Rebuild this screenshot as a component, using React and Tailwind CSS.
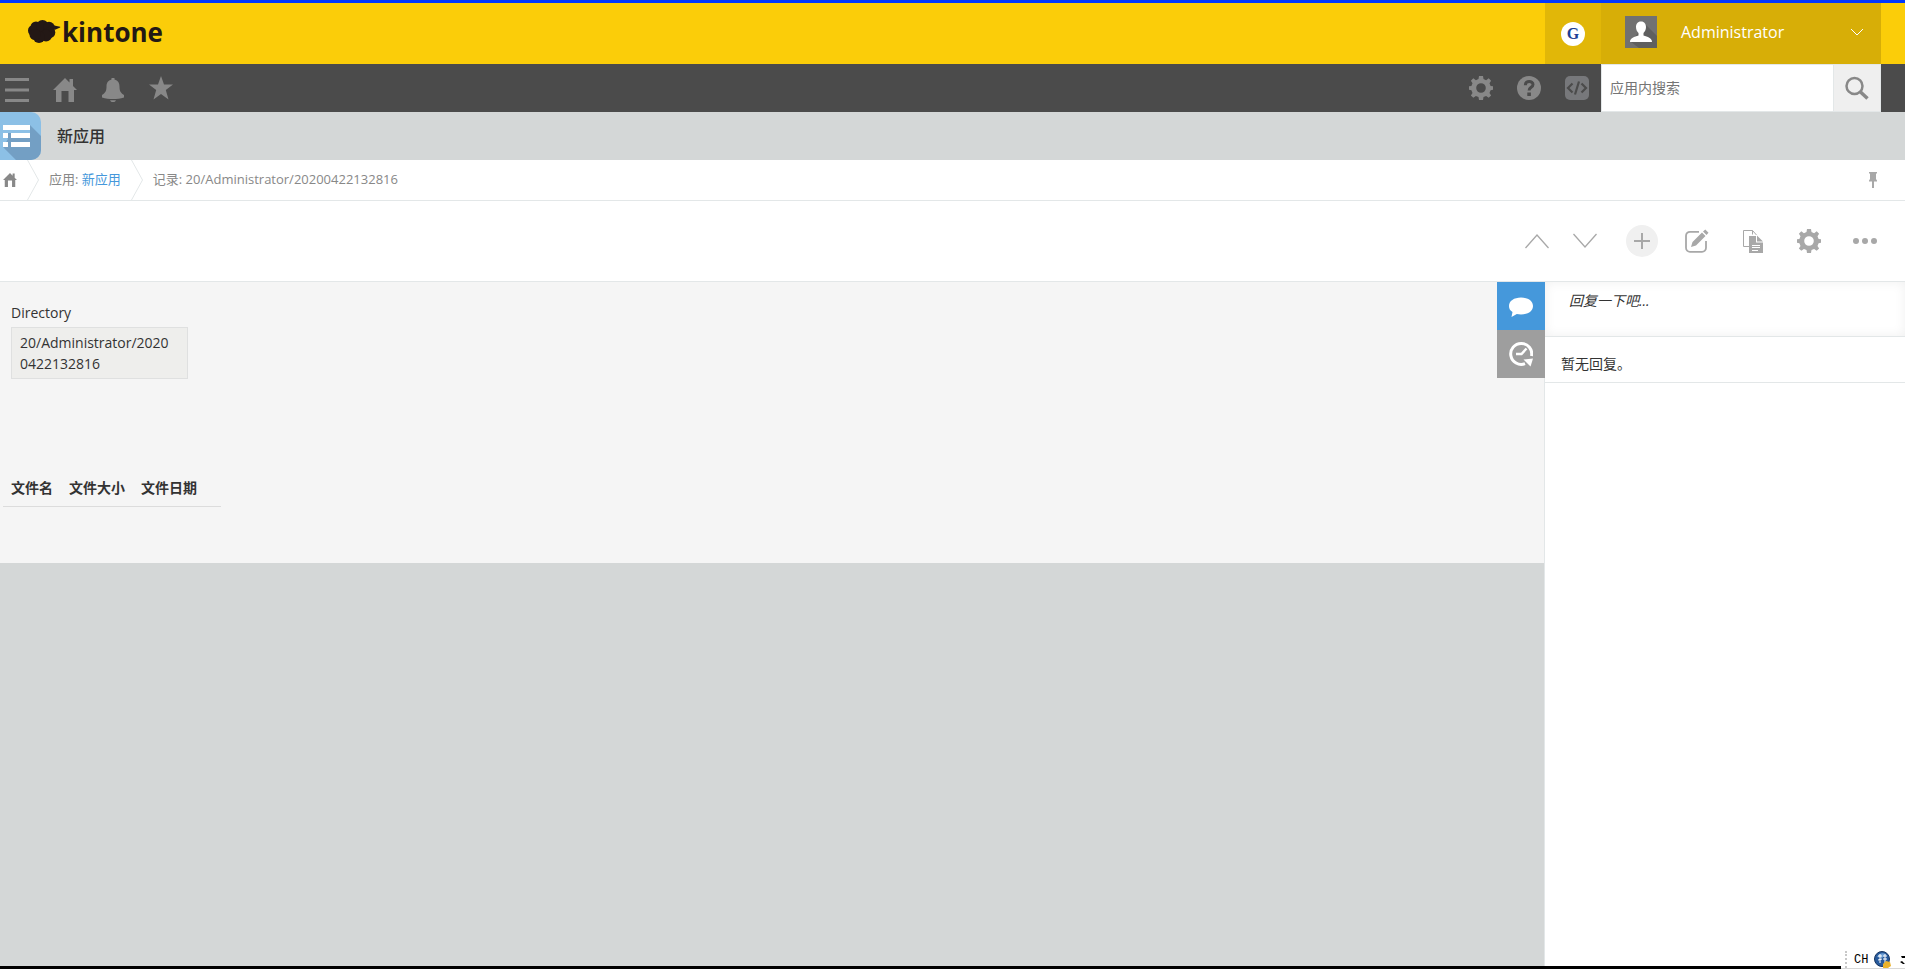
import React, { useState } from 'react';

const gearPath =
  'M10 0h4l.5 3.1 2.6 1.1L19.7 2.3l2.4 2.4-1.6 2.5 1.1 2.7L24 10.300v3.400l-2.400.500-1.100 2.700 1.600 2.500-2.400 2.400-2.600-1.800-2.600 1.100L14 24h-4l-.5-2.900-2.600-1.100-2.600 1.800-2.400-2.400 1.600-2.500-1.100-2.700L0 13.700v-3.400l2.400-.4 1.100-2.700L1.900 4.700l2.400-2.400 2.600 1.900 2.600-1.100zM12 7.200a4.800 4.800 0 1 0 0 9.600 4.800 4.800 0 0 0 0-9.600z';

const GearIcon = () => (
  <svg width="24" height="24" viewBox="0 0 24 24" fill="currentColor" fillRule="evenodd">
    <path d={gearPath} />
  </svg>
);

const HomeIcon = ({ size = 24 }) => (
  <svg width={size} height={size} viewBox="0 0 24 24" fill="currentColor">
    <path d="M12 0l4.500 4.500V1H20v7l4 4h-3v12h-5.500V13h-7v11H3V12H0z" />
  </svg>
);

const Logo = () => (
  <span className="flex items-center text-[#231815]">
    <svg width="33" height="24" viewBox="0 0 33 24" fill="currentColor">
      <circle cx="5.500" cy="10.500" r="5.500" />
      <circle cx="8" cy="7" r="5.500" />
      <circle cx="14.500" cy="6.500" r="6.500" />
      <circle cx="21" cy="7.500" r="5.800" />
      <circle cx="21.500" cy="12.500" r="5.800" />
      <circle cx="18" cy="15.500" r="6" />
      <circle cx="11" cy="17" r="6" />
      <circle cx="7" cy="14.500" r="5.500" />
      <path d="M25 5.200l7.200 1.500v.800L26.500 10z" />
    </svg>
    <span className="ml-px text-[26px] leading-9 font-bold">kintone</span>
  </span>
);

const leftNav = [
  {
    label: '菜单',
    icon: (
      <svg width="24" height="24" viewBox="0 0 24 24" fill="currentColor">
        <path d="M0 0h24v3H0zM0 10.500h24v3H0zM0 21h24v3H0z" />
      </svg>
    ),
  },
  { label: '首页', icon: <HomeIcon /> },
  {
    label: '通知',
    icon: (
      <svg width="24" height="24" viewBox="0 0 24 24" fill="currentColor">
        <path d="M10.500 0h3v1.500c3.500.8 5 3.500 5 7 0 4.500 1.200 6.500 4.500 8.500v2.500c-7 2-15 2-22 0V17c3.300-2 4.500-4 4.500-8.500 0-3.500 1.500-6.200 5-7zM9 22.200h6c-.5 1.300-1.500 1.800-3 1.800s-2.500-.5-3-1.800z" />
      </svg>
    ),
  },
  {
    label: '收藏',
    icon: (
      <svg width="24" height="24" viewBox="0 0 24 24" fill="currentColor" className="mb-1">
        <path d="M12 0l3 8.500h9l-7.200 5.500 2.700 9.500L12 18l-7.500 5.500L7.200 14 0 8.500h9z" />
      </svg>
    ),
  },
];

const rightNav = [
  { label: '设置', icon: <GearIcon /> },
  {
    label: '帮助',
    icon: (
      <svg width="24" height="24" viewBox="0 0 24 24">
        <circle cx="12" cy="12" r="12" fill="currentColor" />
        <path d="M8.300 9.200c0-5 7.700-4.800 7.700-.6 0 2.800-3.900 2.700-3.900 5.800" fill="none" stroke="#4b4b4b" strokeWidth="3" />
        <path d="M10.300 16.500h3.600V20h-3.600z" fill="#4b4b4b" />
      </svg>
    ),
  },
  {
    label: '开发者',
    icon: (
      <svg width="24" height="24" viewBox="0 0 24 24">
        <rect width="24" height="24" rx="5" fill="#77787b" />
        <path d="M7.500 7.500L3 12l4.500 4.500M16.500 7.500L21 12l-4.500 4.500M14 5.500l-4 13" fill="none" stroke="#4b4b4b" strokeWidth="2.200" />
      </svg>
    ),
  },
];

const pagerActions = [
  { label: '上一条', path: 'M.5 19L12 6l11.500 13' },
  { label: '下一条', path: 'M.5 5L12 18 23.500 5' },
];

const recordActions = [
  {
    label: '编辑',
    icon: (
      <svg width="24" height="24" viewBox="0 0 24 24">
        <path d="M14 2.800H5A4 4 0 0 0 1 6.800v12a4 4 0 0 0 4 4h12a4 4 0 0 0 4-4V12" fill="none" stroke="currentColor" strokeWidth="1.800" />
        <path d="M6 18l1.500-5L17 3.500l3.500 3.500-9.500 9.500zM18 2.500L20.300.500l3.200 3.200-2 2.300z" fill="currentColor" />
      </svg>
    ),
  },
  {
    label: '复制',
    icon: (
      <svg width="24" height="24" viewBox="0 0 24 24">
        <path d="M8.500 17.500h-6v-16h9v4M11.500 1.500l4 4.500" fill="none" stroke="currentColor" />
        <path d="M8 7h7v6.500h7V24H8zM16 6.500l6 6h-6z" fill="currentColor" />
        <path d="M11 16.500h8M11 18.500h8M11 21.500h6" stroke="#fff" />
      </svg>
    ),
  },
  { label: '选项', icon: <GearIcon /> },
  {
    label: '更多',
    icon: (
      <svg width="24" height="24" viewBox="0 0 24 24" fill="currentColor">
        <circle cx="3" cy="12" r="3" />
        <circle cx="12" cy="12" r="3" />
        <circle cx="21" cy="12" r="3" />
      </svg>
    ),
  },
];

const fileColumns = ['文件名', '文件大小', '文件日期'];

const Header = () => (
  <header className="flex h-16 items-stretch border-t-3 border-[#0037ff] bg-[#fbcd09]">
    <a href="#" className="flex flex-1 items-center pb-1 pl-7">
      <Logo />
    </a>
    <button aria-label="G" className="flex w-14 items-center justify-center bg-[#e1b708]">
      <span className="flex h-6 w-6 items-center justify-center rounded-full bg-white font-['Liberation_Serif',serif] text-base font-bold text-[#1c3f94]">
        G
      </span>
    </button>
    <button className="mr-6 flex w-70 items-center bg-[#d7ae07] pb-1 pl-6 pr-4 text-white">
      <svg width="32" height="32" viewBox="0 0 32 32">
        <rect width="32" height="32" fill="#717171" />
        <path d="M20 8l12 12v12H14l-8-6z" fill="#5f5f5f" />
        <path d="M16 5.500c3.500 0 5 2.500 5 5.500 0 2.500-1 4.500-2.500 6v2.500c4 1 8.500 2.500 8.500 6.500H5c0-4 4.500-5.500 8.500-6.500V17c-1.500-1.500-2.500-3.500-2.500-6 0-3 1.500-5.500 5-5.500z" fill="#fff" />
      </svg>
      <span className="ml-6 flex-1 text-left text-base">Administrator</span>
      <svg width="16" height="8" viewBox="0 0 16 8" fill="none" stroke="#fff">
        <path d="M2 1l6 6 6-6" />
      </svg>
    </button>
  </header>
);

const NavBar = () => {
  const [keyword, setKeyword] = useState('');

  return (
    <nav className="flex h-12 items-stretch bg-[#4b4b4b] pr-6 text-[#888]">
      <div className="flex flex-1 items-center gap-6 pl-[5px] pt-1">
        {leftNav.map((item) => (
          <button key={item.label} aria-label={item.label}>
            {item.icon}
          </button>
        ))}
      </div>
      <div className="flex items-center gap-6 pr-3">
        {rightNav.map((item) => (
          <button key={item.label} aria-label={item.label}>
            {item.icon}
          </button>
        ))}
      </div>
      <form className="flex w-70 border border-[#e3e7e8] bg-white" onSubmit={(e) => e.preventDefault()}>
        <input
          type="text"
          aria-label="应用内搜索"
          placeholder="应用内搜索"
          value={keyword}
          onChange={(e) => setKeyword(e.target.value)}
          className="min-w-0 flex-1 pl-2 text-sm text-[#333] outline-none placeholder:text-[#757575]"
        />
        <button aria-label="搜索" className="flex w-[47px] items-center justify-center border-l border-[#e3e7e8] bg-[#efefef] text-[#888]">
          <svg width="24" height="24" viewBox="0 0 24 24" fill="none" stroke="currentColor" strokeWidth="2.500">
            <circle cx="9.500" cy="10" r="8" />
            <path d="M15 15.500l7.500 7" strokeWidth="3.500" />
          </svg>
        </button>
      </form>
    </nav>
  );
};

const AppTitle = () => (
  <div className="flex h-12 items-center bg-[#d4d7d7]">
    <svg width="41" height="48" viewBox="0 0 41 48">
      <path d="M0 0h31a10 10 0 0 1 10 10v28a10 10 0 0 1-10 10H0z" fill="#8cc0e6" />
      <path d="M30 13l11 11v14a10 10 0 0 1-10 10H16L3 35l5-8-5-6h27z" fill="#739fc4" />
      <path d="M3 13h27v5H3zM3 21h5v5H3zM11 21h19v5H11zM3 30h5v5H3zM11 30h19v5H11z" fill="#fff" />
    </svg>
    <h1 className="ml-4 text-base font-medium text-[#333]">新应用</h1>
  </div>
);

const Chevron = () => (
  <svg width="12" height="40" viewBox="0 0 12 40" fill="none" stroke="#e3e7e8">
    <path d="M.5 0l11 20-11 20" />
  </svg>
);

const Breadcrumb = () => (
  <div className="flex h-[41px] items-center border-b border-[#e3e7e8] bg-white text-[13px] text-[#888]">
    <a href="#" aria-label="首页" className="ml-[3px] mr-[10px]">
      <HomeIcon size={14} />
    </a>
    <Chevron />
    <span className="mx-[10px]">
      应用: <a href="#" className="text-[#4598db]">新应用</a>
    </span>
    <Chevron />
    <span className="ml-[10px] flex-1">记录: 20/Administrator/20200422132816</span>
    <button aria-label="固定" className="mr-6 text-[#a8a8a8]">
      <svg width="16" height="16" viewBox="0 0 16 16" fill="currentColor">
        <path d="M4 0h8v1.500h-1V7l1 1.500v1H9V16H7V9.500H4v-1L5 7V1.500H4z" />
      </svg>
    </button>
  </div>
);

const Toolbar = () => (
  <div className="flex h-[81px] items-center justify-end border-b border-[#e3e7e8] bg-white pr-7 text-[#a8a8a8]">
    <div className="flex gap-6">
      {pagerActions.map((action) => (
        <button key={action.label} aria-label={action.label}>
          <svg width="24" height="24" viewBox="0 0 24 24" fill="none" stroke="currentColor" strokeWidth="1.300">
            <path d={action.path} />
          </svg>
        </button>
      ))}
    </div>
    <button aria-label="添加" className="ml-[29px] mr-[27px] flex h-8 w-8 items-center justify-center rounded-full bg-[#f0f0f0]">
      <svg width="16" height="16" viewBox="0 0 16 16" fill="currentColor">
        <path d="M7 0h2v7h7v2H9v7H7V9H0V7h7z" />
      </svg>
    </button>
    <div className="flex gap-8">
      {recordActions.map((action) => (
        <button key={action.label} aria-label={action.label}>
          {action.icon}
        </button>
      ))}
    </div>
  </div>
);

const Record = () => (
  <div className="flex h-[281px] flex-1 flex-col items-start bg-[#f5f5f5] pl-[3px] pt-5">
    <div className="ml-2">
      <div className="mb-1 text-sm leading-[21px] text-[#333]">Directory</div>
      <div className="w-[177px] border border-[#dfe0e0] bg-[#eeeeec] py-1 pl-2 pr-4 text-sm leading-[21px] break-all text-[#333]">
        20/Administrator/20200422132816
      </div>
    </div>
    <table className="mt-[87px] w-[218px] text-left text-sm text-[#333]">
      <thead>
        <tr className="border-b border-[#dcdcdc]">
          {fileColumns.map((name) => (
            <th key={name} className="h-10 px-2 pt-1 font-bold whitespace-nowrap last:w-full">
              {name}
            </th>
          ))}
        </tr>
      </thead>
    </table>
  </div>
);

const Comments = () => (
  <aside className="w-[361px] border-l border-[#e3e7e8] bg-white text-sm text-[#333]">
    <button className="block h-[55px] w-full border-b border-[#e3e7e8] pb-4 pl-6 text-left italic shadow-[inset_0_0_12px_#f0f0f0]">
      回复一下吧...
    </button>
    <p className="flex h-[46px] items-end border-b border-[#e3e7e8] pb-2 pl-4">暂无回复。</p>
  </aside>
);

// Input language bar docked in the bottom right corner
const LanguageBar = () => (
  <div className="absolute bottom-0 right-0 flex h-[22px] w-16 items-center overflow-hidden border-b border-[#d8d8d8] bg-white pt-1 text-black">
    <span className="ml-1 h-full border-l-2 border-dotted border-[#c8c8c8]" />
    <span className="ml-[7px] font-['Liberation_Mono',monospace] text-xs">CH</span>
    <svg className="ml-[6px] shrink-0" width="17" height="17" viewBox="0 0 17 17">
      <circle cx="8" cy="8" r="7.500" fill="#285a9c" stroke="#17345f" />
      <path d="M3 6a6 6 0 0 1 9-2.500L8 7z" fill="#6f9fd3" />
      <path d="M4 5h4M6 3v9M4 9l4-1M9 5h4M9 8h4M11 3v9" fill="none" stroke="#fff" />
      <path d="M9 13l3-3 4 1 1 4-3 2H9z" fill="#eab22b" />
    </svg>
    <svg className="ml-2 shrink-0" width="6" height="12" viewBox="0 0 6 12">
      <path d="M2 2h4v2H3zM3 7l3 3H4L1 8z" />
    </svg>
  </div>
);

export default function App() {
  return (
    <div className="relative flex min-h-screen flex-col bg-[#d4d7d7] font-['Open_Sans','Noto_Sans_CJK_SC',sans-serif]">
      <Header />
      <NavBar />
      <AppTitle />
      <Breadcrumb />
      <Toolbar />
      <main className="relative flex flex-1">
        <div className="flex flex-1 items-start">
          <Record />
        </div>
        <div className="absolute right-[360px] top-0 flex flex-col text-white">
          <button aria-label="回复" className="flex h-12 w-12 items-center justify-center bg-[#4598db]">
            <svg width="24" height="24" viewBox="0 0 24 24" fill="currentColor">
              <path d="M12 3.500c7 0 12 3.500 12 8.500s-5 8.500-12 8.500c-1.500 0-3-.2-4.200-.5L2.500 23l1-5C1 16.500 0 14.500 0 12c0-5 5-8.500 12-8.500z" />
            </svg>
          </button>
          <button aria-label="变更记录" className="flex h-12 w-12 items-center justify-center bg-[#9e9e9e]">
            <svg width="24" height="26" viewBox="0 0 24 26" fill="none" stroke="currentColor" strokeWidth="3">
              <path d="M22.500 15A10.500 10.500 0 1 0 16 22.700" />
              <path d="M14.500 18.500L24 17.500 21.500 25.500z" fill="currentColor" stroke="none" />
              <path d="M17.500 7.500L12.500 13H7" strokeWidth="2.500" />
            </svg>
          </button>
        </div>
        <Comments />
      </main>
      <div className="h-[3px] bg-black" />
      <LanguageBar />
    </div>
  );
}
